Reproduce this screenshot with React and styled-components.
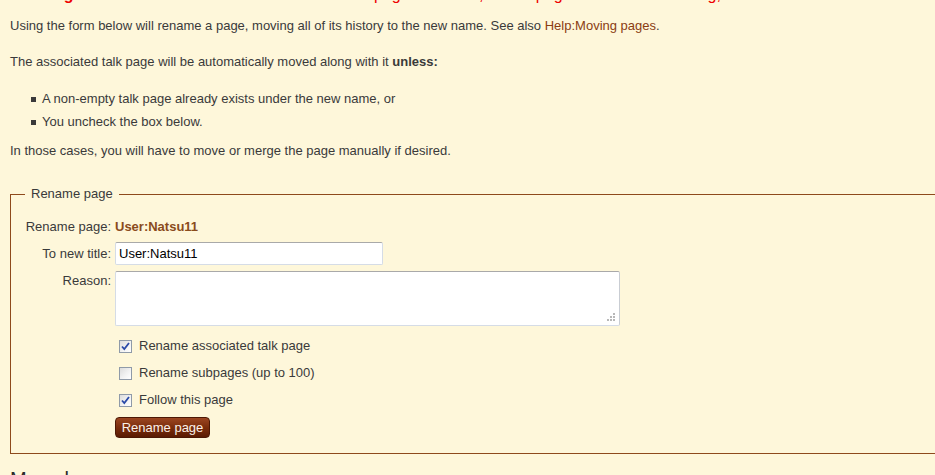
import styled, { createGlobalStyle } from "styled-components";

const GlobalStyle = createGlobalStyle`
  html, body {
    margin: 0;
    padding: 0;
    overflow: hidden;
    background: #fef7da;
  }
  body {
    font-family: "Liberation Sans", Arial, sans-serif;
    font-size: 13px;
    color: #3a3a3a;
  }
`;

const Page = styled.div`
  padding: 0 10px;
`;

const Warning = styled.p`
  margin: -15px 0 0;
  font-size: 16px;
  line-height: 20px;
  color: #ee0000;
  white-space: nowrap;
  b {
    font-weight: bold;
  }
`;

const Text = styled.p`
  margin: ${(p) => p.$top || 0}px 0 0;
  line-height: 20px;
  a {
    color: #8a3d12;
    text-decoration: none;
  }
`;

const List = styled.ul`
  list-style: none;
  margin: 17px 0 0;
  padding: 0 0 0 21px;
`;

const Item = styled.li`
  position: relative;
  line-height: 20px;
  padding-left: 11px;
  margin-bottom: 3px;
  &::before {
    content: "";
    position: absolute;
    left: 0;
    top: 8px;
    width: 5px;
    height: 5px;
    background: #3a3a3a;
  }
`;

const Fieldset = styled.fieldset`
  margin: 24px -60px 0 0;
  padding: 14px 14px 15px 14px;
  border: 1px solid #8e4a1c;
  min-width: 0;
`;

const Legend = styled.legend`
  padding: 0 6px;
  line-height: 18px;
`;

const Form = styled.div`
  display: grid;
  grid-template-columns: 88px 1fr;
  column-gap: 2px;
  align-items: start;
`;

const Label = styled.div`
  text-align: right;
  padding-right: 2px;
  line-height: ${(p) => p.$lh || 20}px;
  margin-top: ${(p) => p.$top || 0}px;
`;

const Field = styled.div`
  margin-top: ${(p) => p.$top || 0}px;
  line-height: 20px;
`;

const Current = styled.span`
  font-weight: bold;
  color: #8a4b1c;
`;

const TitleInput = styled.input`
  box-sizing: border-box;
  width: 268px;
  height: 23px;
  margin: 0;
  padding: 2px 3px;
  font-family: "Liberation Sans", Arial, sans-serif;
  font-size: 13px;
  color: #000;
  background: #fff;
  border: 1px solid #d5dce6;
  border-top-color: #a9a9a9;
  border-radius: 2px;
  outline: none;
`;

const AreaWrap = styled.div`
  position: relative;
  width: 505px;
  height: 55px;
`;

const ReasonArea = styled.textarea`
  display: block;
  box-sizing: border-box;
  width: 100%;
  height: 100%;
  margin: 0;
  padding: 2px 3px;
  font-family: "Liberation Sans", Arial, sans-serif;
  font-size: 13px;
  background: #fff;
  border: 1px solid #d5dce6;
  border-top-color: #a9a9a9;
  border-right-color: #c9cdd3;
  border-radius: 2px;
  resize: none;
  outline: none;
`;

const Grip = styled.svg`
  position: absolute;
  right: 5px;
  bottom: 5px;
`;

const CheckRow = styled.label`
  display: flex;
  align-items: center;
  height: 20px;
  margin-top: ${(p) => p.$top || 0}px;
  padding-left: 4px;
  gap: 7px;
`;

const Box = styled.span`
  box-sizing: border-box;
  width: 13px;
  height: 13px;
  border: 1px solid #8f9aa8;
  background: linear-gradient(135deg, #dcdcdc 0%, #f4f4f4 60%, #ffffff 100%);
  display: flex;
  align-items: center;
  justify-content: center;
`;

const Button = styled.button`
  display: block;
  box-sizing: border-box;
  width: 95px;
  height: 21px;
  margin-top: 7px;
  padding: 0;
  font-family: "Liberation Sans", Arial, sans-serif;
  font-size: 13px;
  color: #fbf1ea;
  background: linear-gradient(to bottom, #9c4621 0%, #7a2d0c 50%, #5a1b02 100%);
  border: 1px solid #4c1804;
  border-radius: 4px;
  cursor: pointer;
`;

const Heading = styled.h2`
  margin: 13px 0 0;
  font-size: 20px;
  font-weight: normal;
  line-height: 24px;
  color: #2b2b2b;
`;

const Check = () => (
  <svg width="9" height="9" viewBox="0 0 9 9">
    <path d="M1 4.5 L3.3 7 L8 1" fill="none" stroke="#2a4aa8" strokeWidth="1.8" />
  </svg>
);

const Checkbox = ({ checked, children, top }) => (
  <CheckRow $top={top}>
    <Box>{checked && <Check />}</Box>
    {children}
  </CheckRow>
);

const App = () => {
  return (
    <Page>
      <GlobalStyle />
      <Warning>
        <b>Warning:</b> Be certain that the choice to rename this page is correct, as the page will be moved along, see also.
      </Warning>
      <Text $top={11}>
        Using the form below will rename a page, moving all of its history to the new name. See also{" "}
        <a href="#">Help:Moving pages</a>.
      </Text>
      <Text $top={16}>
        The associated talk page will be automatically moved along with it <b>unless:</b>
      </Text>
      <List>
        <Item>A non-empty talk page already exists under the new name, or</Item>
        <Item>You uncheck the box below.</Item>
      </List>
      <Text $top={9}>In those cases, you will have to move or merge the page manually if desired.</Text>
      <Fieldset>
        <Legend>Rename page</Legend>
        <Form>
          <Label>Rename page:</Label>
          <Field>
            <Current>User:Natsu11</Current>
          </Field>
          <Label $top={5} $lh={23}>To new title:</Label>
          <Field $top={5}>
            <TitleInput defaultValue="User:Natsu11" />
          </Field>
          <Label $top={6} $lh={20}>Reason:</Label>
          <Field $top={6}>
            <AreaWrap>
              <ReasonArea />
              <Grip width="9" height="9" viewBox="0 0 9 9">
                <rect x="7" y="1" width="2" height="2" fill="#b8b8b8" />
                <rect x="4" y="4" width="2" height="2" fill="#b8b8b8" />
                <rect x="7" y="4" width="2" height="2" fill="#b8b8b8" />
                <rect x="1" y="7" width="2" height="2" fill="#b8b8b8" />
                <rect x="4" y="7" width="2" height="2" fill="#b8b8b8" />
                <rect x="7" y="7" width="2" height="2" fill="#b8b8b8" />
              </Grip>
            </AreaWrap>
          </Field>
          <div />
          <Field>
            <Checkbox checked top={10}>Rename associated talk page</Checkbox>
            <Checkbox top={7}>Rename subpages (up to 100)</Checkbox>
            <Checkbox checked top={7}>Follow this page</Checkbox>
            <Button>Rename page</Button>
          </Field>
        </Form>
      </Fieldset>
      <Heading>Move log</Heading>
    </Page>
  );
};

export default App;
